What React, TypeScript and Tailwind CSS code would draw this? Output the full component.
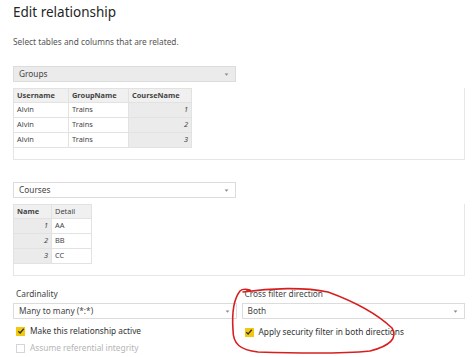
import React from 'react';

const groupRows = [
  { user: 'Alvin', group: 'Trains', course: 1 },
  { user: 'Alvin', group: 'Trains', course: 2 },
  { user: 'Alvin', group: 'Trains', course: 3 },
];

const courseRows = [
  { name: 1, detail: 'AA' },
  { name: 2, detail: 'BB' },
  { name: 3, detail: 'CC' },
];

function Caret() {
  return (
    <svg width="5" height="3" viewBox="0 0 6 4" className="shrink-0">
      <path d="M0.5 0.5 L5.5 0.5 L3 3.5 Z" fill="#888" />
    </svg>
  );
}

function Dropdown({ label, gray, className = '' }: { label: string; gray?: boolean; className?: string }) {
  return (
    <div
      className={`h-[16px] flex items-center justify-between pl-[5px] pr-[6px] border text-[8.3px] text-[#444] ${
        gray ? 'bg-[#ebebeb] border-[#dcdcdc]' : 'bg-white border-[#dcdcdc]'
      } ${className}`}
    >
      <span className="leading-none">{label}</span>
      <Caret />
    </div>
  );
}

function Check({ on, disabled, label }: { on?: boolean; disabled?: boolean; label: string }) {
  return (
    <div className="flex items-center gap-[5px] h-[12px]">
      <div
        className={`w-[9px] h-[9px] flex items-center justify-center ${
          on ? 'bg-[#f2c811]' : 'border border-[#d5d5d5] bg-white'
        }`}
      >
        {on && (
          <svg width="8" height="8" viewBox="0 0 8 8">
            <path d="M1.3 4.2 L3.1 6 L6.8 1.8" stroke="#333" strokeWidth="1.3" fill="none" />
          </svg>
        )}
      </div>
      <span className={`text-[8.3px] leading-none ${disabled ? 'text-[#b5b5b5]' : 'text-[#333]'}`}>{label}</span>
    </div>
  );
}

export default function App() {
  const th = 'h-[14px] px-[3px] text-left font-bold text-[7.4px] leading-none border border-[#e2e2e2] bg-[#f0f0f0] text-[#444]';
  const td = 'h-[15px] px-[3px] text-[7.4px] leading-none border border-[#e2e2e2] text-[#444]';

  return (
    <div className="relative w-[474px] h-[357px] bg-white overflow-hidden font-['Segoe_UI','Noto_Sans',sans-serif] text-[#333]">
      <div className="pl-[13px] pr-[9px]">
        <h1 className="pt-[2px] h-[24px] text-[13.5px] leading-[20px] text-[#252525]">Edit relationship</h1>
        <p className="mt-[12px] text-[8.3px] leading-[12px] text-[#555]">Select tables and columns that are related.</p>

        <Dropdown label="Groups" gray className="mt-[18px] w-[223px]" />
        <div className="mt-[6px] h-[72px] border border-[#e6e6e6] border-t-0">
          <table className="border-collapse -ml-px">
            <thead>
              <tr>
                <th className={`${th} w-[55px]`}>Username</th>
                <th className={`${th} w-[60px]`}>GroupName</th>
                <th className={`${th} w-[63px]`}>CourseName</th>
              </tr>
            </thead>
            <tbody>
              {groupRows.map((r, i) => (
                <tr key={i}>
                  <td className={td}>{r.user}</td>
                  <td className={td}>{r.group}</td>
                  <td className={`${td} bg-[#ebebeb] text-right italic`}>{r.course}</td>
                </tr>
              ))}
            </tbody>
          </table>
        </div>

        <Dropdown label="Courses" className="mt-[22px] w-[223px]" />
        <div className="mt-[6px] h-[72px] border border-[#e6e6e6] border-t-0">
          <table className="border-collapse -ml-px">
            <thead>
              <tr>
                <th className={`${th} w-[38px]`}>Name</th>
                <th className={`${th} w-[40px] font-normal`}>Detail</th>
              </tr>
            </thead>
            <tbody>
              {courseRows.map((r, i) => (
                <tr key={i}>
                  <td className={`${td} bg-[#ebebeb] text-right italic`}>{r.name}</td>
                  <td className={td}>{r.detail}</td>
                </tr>
              ))}
            </tbody>
          </table>
        </div>

        <div className="mt-[12px] grid grid-cols-2 gap-x-[5px]">
          <div>
            <div className="pl-[3px] text-[8.3px] leading-[12px] text-[#444]">Cardinality</div>
            <Dropdown label="Many to many (*:*)" className="mt-[3px]" />
            <div className="mt-[6px] pl-[3px] flex flex-col gap-[5px]">
              <Check on label="Make this relationship active" />
              <Check disabled label="Assume referential integrity" />
            </div>
          </div>
          <div>
            <div className="pl-[3px] text-[8.3px] leading-[12px] text-[#444]">Cross filter direction</div>
            <Dropdown label="Both" className="mt-[3px]" />
            <div className="mt-[7px] pl-[3px]">
              <Check on label="Apply security filter in both directions" />
            </div>
          </div>
        </div>
      </div>

      <svg className="absolute left-0 top-0 pointer-events-none" width="474" height="357" viewBox="0 0 474 357">
        <path
          d="M243 292 C 270 288, 305 287, 328 292 C 350 300, 375 312, 392 328 C 398 338, 390 346, 370 351 C 340 354, 290 353, 258 352 C 240 350, 233 344, 233 330 C 232 316, 233 300, 240 291 C 242 289, 246 289, 250 290"
          stroke="#d81f1f"
          strokeWidth="1.6"
          fill="none"
          strokeLinecap="round"
        />
      </svg>
    </div>
  );
}
